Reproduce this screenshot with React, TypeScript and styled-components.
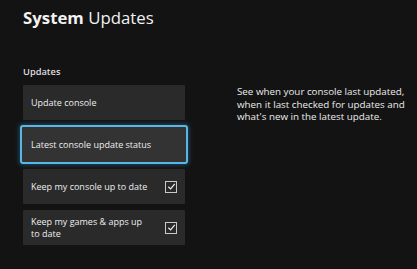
import { ReactElement } from 'react'
import styled, { createGlobalStyle } from 'styled-components'

const GlobalStyle = createGlobalStyle`
  html, body {
    margin: 0;
    padding: 0;
    background: #131313;
  }
  body {
    font-family: "Open Sans", "Noto Sans", "Liberation Sans", sans-serif;
    color: #ececec;
  }
`

const Page = styled.div`
  width: 417px;
  height: 269px;
  box-sizing: border-box;
  padding: 7px 0 0 23px;
  background: #131313;
  overflow: hidden;
`

const Title = styled.h1`
  margin: 0;
  font-size: 16.8px;
  line-height: 22px;
  font-weight: 400;
  color: #f2f2f2;

  strong {
    font-weight: 700;
  }
`

const Body = styled.div`
  display: flex;
  align-items: flex-start;
  margin-top: 37px;
`

const LeftColumn = styled.div`
  width: 162px;
  display: flex;
  flex-direction: column;
`

const SectionLabel = styled.div`
  font-size: 9.3px;
  line-height: 12px;
  font-weight: 600;
  color: #dedede;
  margin-bottom: 7px;
`

const List = styled.div`
  display: flex;
  flex-direction: column;
  gap: 6px;
`

const Row = styled.div<{ $focused?: boolean }>`
  display: flex;
  align-items: center;
  justify-content: space-between;
  box-sizing: border-box;
  height: ${p => (p.$focused ? '39px' : '35px')};
  margin: ${p => (p.$focused ? '-1px -3px' : '0')};
  padding: ${p => (p.$focused ? '0 8px 0 9px' : '0 8px 0 8px')};
  background: ${p => (p.$focused ? '#333333' : '#2a2a2a')};
  border: ${p => (p.$focused ? '2px solid #5ab6e4' : 'none')};
  border-radius: ${p => (p.$focused ? '3px' : '1px')};
  box-shadow: ${p => (p.$focused ? '0 0 4px 1px rgba(40, 120, 170, 0.55)' : 'none')};
`

const RowText = styled.span`
  font-size: 9px;
  line-height: 12px;
  color: #eeeeee;
  max-width: 122px;
`

const Check = styled.span`
  flex: none;
  width: 12px;
  height: 12px;
  box-sizing: border-box;
  border: 1.5px solid #c9c9c9;
  display: flex;
  align-items: center;
  justify-content: center;
`

const Description = styled.p`
  margin: 20px 0 0 52px;
  width: 172px;
  font-size: 9.8px;
  line-height: 12.5px;
  color: #ededed;
`

const CheckBox = (): ReactElement => (
  <Check>
    <svg width="9" height="9" viewBox="0 0 10 10">
      <path d="M1.5 5.3 L4 7.6 L8.6 2.2" fill="none" stroke="#f2f2f2" strokeWidth="1.3" />
    </svg>
  </Check>
)

export const App = (): ReactElement => {
  return (
    <Page>
      <GlobalStyle />
      <Title>
        <strong>System</strong> Updates
      </Title>
      <Body>
        <LeftColumn>
          <SectionLabel>Updates</SectionLabel>
          <List>
            <Row>
              <RowText>Update console</RowText>
            </Row>
            <Row $focused>
              <RowText>Latest console update status</RowText>
            </Row>
            <Row>
              <RowText>Keep my console up to date</RowText>
              <CheckBox />
            </Row>
            <Row>
              <RowText>Keep my games &amp; apps up to date</RowText>
              <CheckBox />
            </Row>
          </List>
        </LeftColumn>
        <Description>
          See when your console last updated, when it last checked for updates and what's new in the
          latest update.
        </Description>
      </Body>
    </Page>
  )
}

export default App
